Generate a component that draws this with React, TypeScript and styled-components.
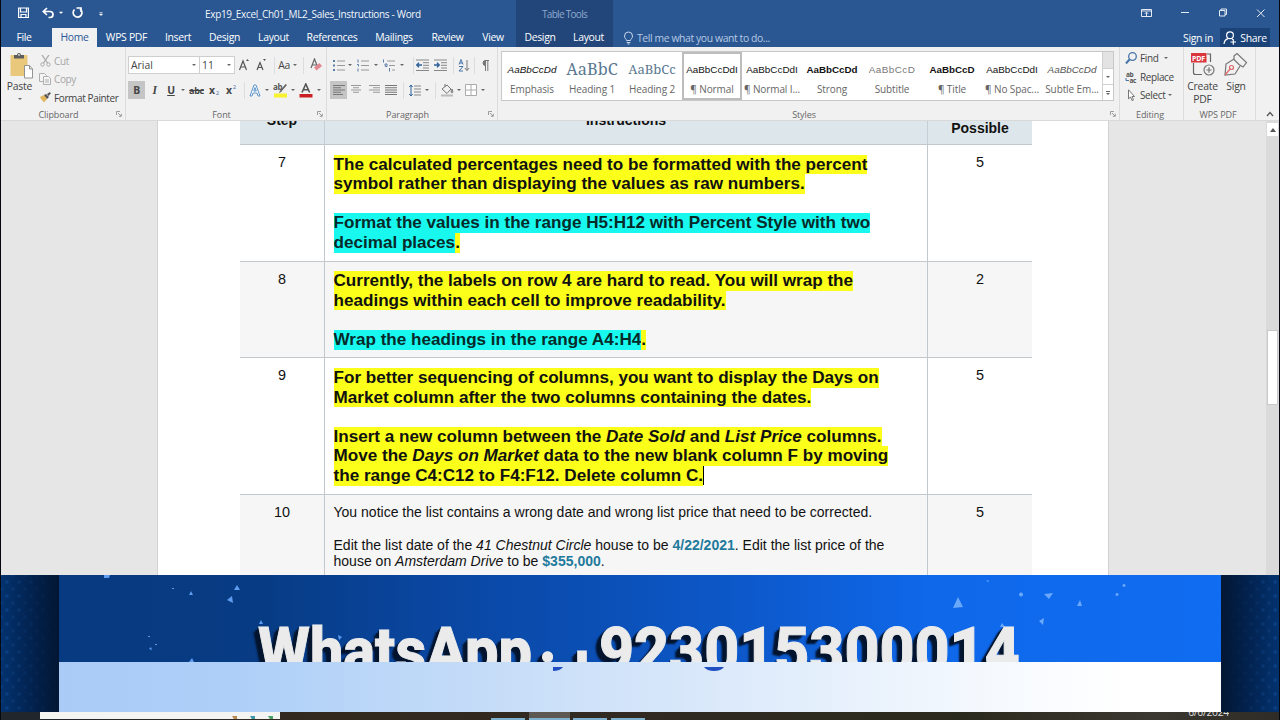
import React from 'react';
import styled, { createGlobalStyle } from 'styled-components';

const Global = createGlobalStyle`
  * { box-sizing: border-box; }
  body { margin: 0; overflow: hidden; background: #000; }
`;

const UI = '"Open Sans", "Noto Sans", sans-serif';
const DOC = '"Liberation Sans", Arial, sans-serif';

const Screen = styled.div`
  width: 1280px;
  height: 720px;
  display: flex;
  flex-direction: column;
  overflow: hidden;
  padding: 0 1px;
  background: #05080f;
  font-family: ${UI};
  font-size: 10.4px;
  letter-spacing: -0.3px;
  color: #444;
`;

/* ---------- header ---------- */
const Header = styled.header`
  height: 47px;
  flex: none;
  display: grid;
  grid-template-columns: 515px 97px 1fr;
  background: #2a5791;
  color: #fff;
`;
const HeadCol = styled.div<{ $dark?: boolean }>`
  display: grid;
  grid-template-rows: 28px 19px;
  background: ${(p) => (p.$dark ? '#224679' : 'transparent')};
`;
const HeadRow = styled.div`
  display: flex;
  align-items: center;
  white-space: nowrap;
`;
const Title = styled.div<{ $l?: number; $dim?: boolean }>`
  margin-left: ${(p) => p.$l ?? 0}px;
  color: ${(p) => (p.$dim ? '#8fa9cf' : '#f3f6fb')};
  font-size: 10px;
  letter-spacing: ${(p) => (p.$dim ? -0.6 : -0.325)}px;
  letter-spacing: ${(p) => (p.$dim ? -0.75 : -0.325) + (p.$dim ? 0.05 : 0)}px;
  line-height: 28px;
`;
const Tab = styled.div<{ $w: number; $on?: boolean }>`
  width: ${(p) => p.$w}px;
  flex: none;
  height: 20px;
  line-height: 19px;
  text-align: center;
  color: ${(p) => (p.$on ? '#2b579a' : '#fff')};
  background: ${(p) => (p.$on ? '#f1f1f1' : 'transparent')};
`;
const Hint = styled.div`
  color: #b6c8e4;
  margin-left: 3px;
  letter-spacing: -0.4px;
  flex: 1;
`;
const Share = styled.div`
  width: 50px;
  height: 19px;
  display: flex;
  align-items: center;
  justify-content: center;
  gap: 3px;
  background: #1c4378;
  margin: 0 9px 0 7px;
`;

/* ---------- ribbon ---------- */
const Ribbon = styled.div`
  height: 74px;
  flex: none;
  display: flex;
  background: #f1f1f1;
  border-bottom: 1px solid #d9d9d9;
`;
const Group = styled.section<{ $w: number }>`
  width: ${(p) => p.$w}px;
  flex: none;
  display: flex;
  flex-direction: column;
  border-right: 1px solid #dcdcdc;
`;
const GroupBody = styled.div<{ $pad?: string }>`
  height: 60px;
  display: flex;
  padding: ${(p) => p.$pad ?? '0'};
`;
const GroupLabel = styled.div`
  height: 13px;
  line-height: 15px;
  font-size: 9px;
  letter-spacing: -0.1px;
  color: #666;
  display: flex;
  padding-right: 3px;
  span { flex: 1; text-align: center; }
  svg { margin-top: 4px; }
`;
const Stack = styled.div<{ $gap?: number }>`
  display: flex;
  flex-direction: column;
  gap: ${(p) => p.$gap ?? 0}px;
`;
const BigButton = styled.div<{ $w: number }>`
  width: ${(p) => p.$w}px;
  display: flex;
  flex-direction: column;
  align-items: center;
  text-align: center;
  line-height: 13px;
  letter-spacing: -0.2px;
  svg { flex: none; margin-bottom: 1px; }
  i { margin-top: 5px; }
`;
const Command = styled.div<{ $dim?: boolean; $pad?: number }>`
  height: 18.5px;
  display: flex;
  align-items: center;
  gap: 3px;
  padding-left: ${(p) => p.$pad ?? 0}px;
  white-space: nowrap;
  font-size: 10px;
  letter-spacing: -0.38px;
  color: ${(p) => (p.$dim ? '#a6a6a6' : '#444')};
`;
const Caret = styled.i`
  width: 0;
  height: 0;
  flex: none;
  border: 2px solid transparent;
  border-top-color: #666;
  border-bottom: 0;
`;
const Tools = styled.div`
  display: flex;
  align-items: center;
  height: 18px;
`;
const Slot = styled.div<{ $w: number; $on?: boolean }>`
  width: ${(p) => p.$w}px;
  height: 18px;
  flex: none;
  display: flex;
  align-items: center;
  justify-content: center;
  background: ${(p) => (p.$on ? '#c5c5c5' : 'transparent')};
  svg { flex: none; }
`;
const Italic = styled.b`
  font-family: "Liberation Serif", serif;
  font-style: italic;
  font-size: 11.5px;
`;
const Struck = styled.b`
  font-size: 9px;
  text-decoration: line-through;
`;
const Script = styled.span<{ $up?: boolean }>`
  font-size: 6px;
  line-height: 8px;
  color: #4775a8;
  margin: ${(p) => (p.$up ? '0 0 7px 1px' : '6px 0 0 1px')};
`;
const Combo = styled.div<{ $w: number }>`
  width: ${(p) => p.$w}px;
  height: 18px;
  flex: none;
  display: flex;
  align-items: center;
  justify-content: space-between;
  padding: 0 3px 0 2px;
  letter-spacing: 0;
  background: #fff;
  border: 1px solid #cfcfcf;
  & + & { border-left: 0; }
`;
const Rule = styled.div`
  width: 1px;
  height: 17px;
  background: #dcdcdc;
`;
const Gallery = styled.div`
  width: 613px;
  height: 50px;
  display: flex;
  background: #fff;
  border: 1px solid #c8c8c8;
`;
const StyleCard = styled.div<{ $on?: boolean }>`
  width: 60px;
  height: 48px;
  flex: none;
  border: 2px solid ${(p) => (p.$on ? '#bdbdbd' : 'transparent')};
  display: flex;
  flex-direction: column;
  align-items: center;
`;
const Sample = styled.div<{ $v?: string }>`
  height: 30px;
  line-height: 31px;
  display: flex;
  justify-content: center;
  white-space: nowrap;
  font-family: ${(p) => (p.$v === 'head1' || p.$v === 'head2' ? '"Noto Serif", "Liberation Serif", serif' : DOC)};
  font-size: ${(p) => (p.$v === 'head1' ? 16.3 : p.$v === 'head2' ? 13 : p.$v === 'bold' ? 9.8 : 9.9)}px;
  font-style: ${(p) => (p.$v === 'italic' || p.$v === 'soft' ? 'italic' : 'normal')};
  font-weight: ${(p) => (p.$v === 'bold' ? 700 : 400)};
  letter-spacing: ${(p) => (p.$v === 'spaced' ? 0.45 : 0)}px;
  color: ${(p) =>
    p.$v === 'head1' || p.$v === 'head2' ? '#5a7890' : p.$v === 'spaced' ? '#777' : p.$v === 'soft' ? '#555' : '#111'};
`;
const SampleName = styled.div`
  line-height: 11px;
  font-size: 10px;
  letter-spacing: -0.1px;
  color: #666;
  white-space: nowrap;
`;
const GalleryScroll = styled.div`
  width: 11px;
  margin-left: auto;
  display: grid;
  grid-template-rows: 1fr 1fr 1fr;
  border-left: 1px solid #d0d0d0;
`;
const ScrollCell = styled.div<{ $off?: boolean }>`
  display: flex;
  flex-direction: column;
  gap: 1px;
  align-items: center;
  justify-content: center;
  background: ${(p) => (p.$off ? '#e3e3e3' : '#fff')};
  & + & { border-top: 1px solid #d0d0d0; }
`;
const Bar = styled.span`
  width: 4px;
  height: 1px;
  background: #666;
`;
const Collapse = styled.div`
  flex: 1;
  display: flex;
  align-items: flex-end;
  justify-content: center;
  padding: 0 0 3px 4px;
`;

/* ---------- document ---------- */
const Workspace = styled.main`
  height: 454px;
  flex: none;
  display: flex;
  justify-content: space-between;
  background: #e6e6e6;
  letter-spacing: 0;
`;
const Page = styled.div`
  width: 952px;
  margin-left: 156px;
  background: #fff;
  border: 1px solid #d2d2d2;
  border-width: 0 1px;
  overflow: hidden;
  font-family: ${DOC};
  color: #111;
`;
const Row = styled.div<{ $h: number; $bg?: string }>`
  width: 792px;
  height: ${(p) => p.$h}px;
  margin-left: 82px;
  display: grid;
  grid-template-columns: 84px 604px 104px;
  background: ${(p) => p.$bg ?? '#fff'};
  border-bottom: 1px solid #c3c8cc;
`;
const Num = styled.div`
  text-align: center;
  font-size: 14.4px;
  line-height: 17px;
  padding-top: 9px;
`;
const Body = styled.div<{ $top?: number }>`
  border: 1px solid #c3c8cc;
  border-width: 0 1px;
  padding: ${(p) => p.$top ?? 10}px 0 0 8.5px;
  white-space: nowrap;
`;
const HeadCell = styled.div`
  border: 1px solid #c3d0d6;
  border-width: 0 1px;
`;
const Shift = styled.div<{ $y: number }>`
  margin-top: ${(p) => p.$y}px;
  text-align: center;
  font-weight: 700;
  font-size: 14px;
  line-height: 14px;
`;
const Line = styled.div`
  height: 19.6px;
  line-height: 19.6px;
  font-size: 17.1px;
  font-weight: 700;
`;
const Mark = styled.span<{ $c?: boolean }>`
  padding: 0.4px 0;
  background: ${(p) => (p.$c ? '#19f8ee' : '#fbff19')};
  color: ${(p) => (p.$c ? '#062a2a' : '#111')};
`;
const Cursor = styled.span`
  border-right: 1px solid #000;
`;
const Small = styled.div`
  height: 16.3px;
  line-height: 16.3px;
  font-size: 14.03px;
  b { color: #1f7a9c; }
`;
const ScrollBar = styled.div`
  width: 13px;
  display: flex;
  flex-direction: column;
  background: #dadada;
`;
const ScrollArrow = styled.div`
  height: 13px;
  margin: 2px 1px 0;
  background: #fff;
  display: flex;
  align-items: center;
  justify-content: center;
`;
const Thumb = styled.div`
  margin: 194px 1px 0;
  height: 75px;
  background: #fff;
  border: 1px solid #c9c9c9;
`;

/* ---------- banner ---------- */
const Banner = styled.div`
  height: 137px;
  flex: none;
  display: grid;
  grid-template-columns: 58px 1162px 58px;
  letter-spacing: 0;
`;
const Side = styled.div<{ $right?: boolean }>`
  background:
    linear-gradient(${(p) => (p.$right ? '270deg' : '90deg')}, rgba(3, 40, 98, 0) 0%, rgba(2, 24, 58, 0.75) 65%, #021733 100%),
    radial-gradient(circle, #0b4389 1.2px, transparent 2.4px) 0 0 / 12px 14px,
    radial-gradient(circle, #093e80 1.2px, transparent 2.4px) 6px 7px / 12px 14px,
    #03326f;
`;
const Center = styled.div`
  display: grid;
  grid-template-rows: 87px 50px;
`;
const Sky = styled.div`
  position: relative;
  overflow: hidden;
  background: linear-gradient(90deg, #073a80 0, #073b83 17%, #0a46a0 32%, #0b4fb5 46%, #0d5bd0 62%, #0f68ea 75%, #106cf0 100%);
`;
const Specks = styled.svg`
  position: absolute;
  inset: 0;
`;
const Phone = styled.div`
  position: relative;
  display: flex;
  padding: 39px 0 0 199px;
  height: 87px;
  overflow: hidden;
`;
const PhonePart = styled.div<{ $sx: number; $w: number; $drop?: number }>`
  width: ${(p) => p.$w}px;
  margin-top: ${(p) => p.$drop ?? 0}px;
  flex: none;
  font-family: Roboto, sans-serif;
  font-weight: 800;
  font-size: 64px;
  line-height: 75px;
  white-space: nowrap;
  color: #ebebeb;
  -webkit-text-stroke: 1px #ebebeb;
  transform-origin: 0 0;
  transform: scaleX(${(p) => p.$sx});
  text-shadow: -2px 1px 1px #04152f, -4px 3px 1px #04152f, -6px 5px 2px #04152f;
`;
const Pale = styled.div`
  background: linear-gradient(90deg, #a9cbf6 0, #aecff8 15%, #c3dbf8 35%, #d9e8fa 55%, #f5f9fe 80%, #fff 92%);
`;
const Taskbar = styled.div`
  height: 8px;
  flex: none;
  display: flex;
  background: linear-gradient(90deg, #20262b 0, #20262b 3%, #33291f 25%, #302a22 50%, #2b2a1e 75%, #3a3830 90%, #2f2c27 100%);
`;
const SearchBox = styled.div`
  width: 240px;
  height: 7px;
  margin-left: 39px;
  background: #f4f4f2;
  overflow: hidden;
`;
const Windows = styled.div`
  display: flex;
  align-items: flex-end;
  gap: 3.5px;
  margin-left: 211px;
`;
const TaskWindow = styled.div<{ $w: number; $on?: boolean }>`
  width: ${(p) => p.$w}px;
  height: ${(p) => (p.$on ? 8 : 2)}px;
  background: ${(p) => (p.$on ? '#5d5851' : 'transparent')};
  border-bottom: 2px solid #7eb0d0;
`;
const DateText = styled.div`
  height: 8px;
  margin: 0 50px 0 auto;
  overflow: hidden;
  color: #ddd;
  font-size: 10.4px;
  line-height: 0;
`;

const Launcher = () => (
  <svg width="6" height="6" viewBox="0 0 6 6" fill="none" stroke="#888" strokeWidth=".8">
    <path d="M.5 4V.5H4M2 2l3 3M5.3 2.8v2.5H2.8" />
  </svg>
);

const Lines = ({ xs, c = '#777' }: { xs: [number, number][]; c?: string }) => (
  <svg width="12" height="12" viewBox="0 0 12 12" stroke={c} strokeWidth="1">
    {xs.map(([a, b], i) => (
      <path key={i} d={`M${a} ${1.5 + i * 2.25}H${b}`} />
    ))}
  </svg>
);

const List = ({ kind }: { kind: number }) => (
  <svg width="14" height="13" viewBox="0 0 14 13">
    <path
      d={kind === 2 ? 'M5 2H13M7 6.5H13M10 11H13' : 'M5 2H13M5 6.5H13M5 11H13'}
      stroke="#999"
      strokeWidth="1.1"
    />
    {kind === 0 && <path d="M1 1h2v2H1zM1 5.5h2v2H1zM1 10h2v2H1z" fill="#5b7ea6" />}
    {kind === 1 && <path d="M2 .5v3M1 5.5h1.5v2M2 9.5v3" stroke="#5b7ea6" fill="none" />}
    {kind === 2 && <path d="M1.5 .5v3M3 5h2v2.5H3.3zM7.5 9v3.5" stroke="#5b7ea6" fill="none" />}
  </svg>
);

const Indent = ({ flip }: { flip?: boolean }) => (
  <svg width="13" height="12" viewBox="0 0 13 12" fill="none">
    <path d="M0 1H13M7 3.7H13M7 6.3H13M7 9H13M0 11.5H13" stroke="#888" />
    <path d={flip ? 'M0 6H5M3 3.8L5.2 6 3 8.2' : 'M6 6H1M3 3.8L.8 6 3 8.2'} stroke="#2e6099" strokeWidth="1.4" />
  </svg>
);

const Clipboard = () => (
  <svg width="26" height="27" viewBox="0 0 26 27">
    <rect x="3.500" y="3" width="17" height="21" rx="1" fill="#e9c77b" />
    <path d="M7 6.500V3h3a2 2 0 0 1 4 0h3v3.500z" fill="#5d5d5d" />
    <circle cx="12" cy="2.800" r=".9" fill="#eee" />
    <path d="M17.500 13.500h5l3 3.500V26h-8z" fill="#fff" stroke="#888" strokeWidth=".9" />
    <path d="M22.500 13.500V17h3" fill="none" stroke="#888" strokeWidth=".9" />
  </svg>
);

const styleCards: [string, string, string?][] = [
  ['AaBbCcDd', 'Emphasis', 'italic'],
  ['AaBbC', 'Heading 1', 'head1'],
  ['AaBbCc', 'Heading 2', 'head2'],
  ['AaBbCcDdI', '¶ Normal'],
  ['AaBbCcDdI', '¶ Normal I...'],
  ['AaBbCcDd', 'Strong', 'bold'],
  ['AaBbCcD', 'Subtitle', 'spaced'],
  ['AaBbCcD', '¶ Title', 'bold'],
  ['AaBbCcDdI', '¶ No Spac...'],
  ['AaBbCcDd', 'Subtle Em...', 'soft'],
];

const specksLeft =
  'M45 0h6l-1 3h-5zM130 20l2-4 2 4zM175 15l3-5 3 5zM168 25l5-4 1 7zM90 74l2-2 1 3zM130 87l3-4 2 4zM200 49l2-4 2 4zM279 60l4 2-3 3zM89 61h2v1h-2zM96 69h2v1h-2zM113 13h2v1h-2z';
const specksRight =
  'M894 33l5-11 5 10zM985 19l9-1-4 6zM1018 31l3-6 2 6zM980 46l5-3-1 7zM962 17.500a2 2 0 1 0 .1 0zM1065 9a1.500 1.500 0 1 0 .1 0zM1058 18a1.500 1.500 0 1 0 .1 0zM941 52l2-4 3 4zM927 6l2-1 1 2z';

export default function App() {
  return (
    <Screen>
      <Global />
      <Header>
        <HeadCol>
          <HeadRow>
            <svg width="106" height="28" viewBox="0 0 106 28" fill="none" stroke="#fff" strokeWidth="1.2">
              <path d="M17.600 8h9.800v9.500h-9.800zM19.500 8v4h6V8M20 17.500V14.500h5v3" />
              <path d="M42.500 11.500h6.500a3 3 0 0 1 0 6H47.500M46 8L42.300 11.500 46 15" strokeWidth="1.700" />
              <path d="M58.500 12h3l-1.500 1.600zM98.500 14h3l-1.500 1.600zM98.500 12.500h3" strokeWidth=".6" fill="#fff" />
              <path d="M79 9a4.400 4.400 0 1 1-5.500 .5M75.500 8h4.500v4" strokeWidth="1.700" />
            </svg>
            <Title $l={98}>Exp19_Excel_Ch01_ML2_Sales_Instructions - Word</Title>
          </HeadRow>
          <HeadRow>
            <Tab $w={46}>File</Tab>
            <Tab $w={5} />
            <Tab $w={45} $on>Home</Tab>
            <Tab $w={59}>WPS PDF</Tab>
            <Tab $w={44}>Insert</Tab>
            <Tab $w={49}>Design</Tab>
            <Tab $w={49}>Layout</Tab>
            <Tab $w={68}>References</Tab>
            <Tab $w={56}>Mailings</Tab>
            <Tab $w={51}>Review</Tab>
            <Tab $w={40}>View</Tab>
          </HeadRow>
        </HeadCol>
        <HeadCol $dark>
          <HeadRow>
            <Title $l={26} $dim>Table Tools</Title>
          </HeadRow>
          <HeadRow>
            <Tab $w={48}>Design</Tab>
            <Tab $w={49}>Layout</Tab>
          </HeadRow>
        </HeadCol>
        <HeadCol>
          <HeadRow>
            <svg width="666" height="28" viewBox="613 0 666 28" fill="none" stroke="#e4ebf5">
              <path d="M1141.500 9.500h10v7h-10zM1141.500 11h10M1146.500 16v-3.500M1144.800 13.800l1.700-1.700 1.700 1.700" />
              <path d="M1181 12.500h8" />
              <path d="M1219.500 10.500h5.500v5.500h-5.500zM1221 10.500v-1.500h5.500v5.500H1225" />
              <path d="M1257 9.500l7.500 7.500M1264.500 9.500L1257 17" />
            </svg>
          </HeadRow>
          <HeadRow>
            <svg width="21" height="14" viewBox="0 0 21 14" fill="none" stroke="#c9d7ec">
              <path d="M13.500 9.500c0-1.500-2-2-2-4.500a4 4 0 0 1 8 0c0 2.500-2 3-2 4.500zM13.700 11.500h3.600M14.500 13h2" />
            </svg>
            <Hint>Tell me what you want to do...</Hint>
            <span>Sign in</span>
            <Share>
              <svg width="14" height="14" viewBox="0 0 14 14" fill="none" stroke="#fff" strokeWidth="1.200">
                <circle cx="7" cy="4.200" r="3.400" />
                <path d="M1 13c.3-3 2-4.800 4-5.400M9 8l1.500 1M7.500 11h5.500M10.300 8.300v5.500" />
              </svg>
              Share
            </Share>
          </HeadRow>
        </HeadCol>
      </Header>

      <Ribbon>
        <Group $w={125}>
          <GroupBody $pad="5px 0 0 5px">
            <BigButton $w={27}>
              <Clipboard />
              Paste
              <Caret />
            </BigButton>
            <Stack>
              <Command $dim $pad={7}>
                <svg width="11" height="12" viewBox="0 0 11 12" fill="none" stroke="#aaa">
                  <path d="M2 0l5.500 8M9 0L3.500 8" strokeWidth="1.300" />
                  <circle cx="2.500" cy="9.500" r="1.700" />
                  <circle cx="8.500" cy="9.500" r="1.700" />
                </svg>
                Cut
              </Command>
              <Command $dim $pad={6}>
                <svg width="12" height="12" viewBox="0 0 12 12" fill="#f4f4f4" stroke="#b0b0b0">
                  <path d="M.5.500h5l2 2v6h-7z" />
                  <path d="M4.500 3.500h5l2 2v6h-7zM6 7h4M6 9h4" />
                </svg>
                Copy
              </Command>
              <Command $pad={7}>
                <svg width="11" height="11" viewBox="0 0 11 11">
                  <path d="M0 5l4-2 3 4-3 3.500c-1-2-3-2.500-4-5.500z" fill="#e2b45b" />
                  <path d="M4 3l2-1 3 3-2 2zM7 2l3-2 .8 1.500L8.500 4z" fill="#555" />
                </svg>
                Format Painter
              </Command>
            </Stack>
          </GroupBody>
          <GroupLabel>
            <span>Clipboard</span>
            <Launcher />
          </GroupLabel>
        </Group>

        <Group $w={201}>
          <GroupBody $pad="9px 0 0 2px">
            <Stack $gap={7}>
              <Tools>
                <Combo $w={72}>Arial<Caret /></Combo>
                <Combo $w={35}>11<Caret /></Combo>
                <Slot $w={18}>
                  <svg width="12" height="14" viewBox="0 0 12 14" fill="none" stroke="#555" strokeWidth="1.200">
                    <path d="M1.500 12L5 3l3.500 9M2.800 9h4.500" />
                    <path d="M8 3l1.500-2L11 3z" fill="#555" stroke="none" />
                  </svg>
                </Slot>
                <Slot $w={16}>
                  <svg width="12" height="14" viewBox="0 0 12 14" fill="none" stroke="#555" strokeWidth="1.200">
                    <path d="M2 12l3-7.500L8 12M3 9.500h4" />
                    <path d="M8 1h3L9.500 3z" fill="#555" stroke="none" />
                  </svg>
                </Slot>
                <Slot $w={5} />
                <Rule />
                <Slot $w={18}>Aa</Slot>
                <Caret />
                <Slot $w={6} />
                <Rule />
                <Slot $w={23}>
                  <svg width="12" height="14" viewBox="0 0 12 14" fill="none">
                    <path d="M1 10l3.500-9L8 10M2.300 7h4" stroke="#666" strokeWidth="1.200" />
                    <path d="M4 9.500L9.500 5 12 8l-5.500 4.500z" fill="#e08792" />
                  </svg>
                </Slot>
              </Tools>
              <Tools>
                <Slot $w={17} $on><b>B</b></Slot>
                <Slot $w={19}><Italic>I</Italic></Slot>
                <Slot $w={14}><b><u>U</u></b></Slot>
                <Slot $w={10}><Caret /></Slot>
                <Slot $w={17}><Struck>abc</Struck></Slot>
                <Slot $w={18}><b>x</b><Script>2</Script></Slot>
                <Slot $w={16}><b>x</b><Script $up>2</Script></Slot>
                <Slot $w={5} />
                <Rule />
                <Slot $w={20}>
                  <svg width="12" height="13" viewBox="0 0 12 13" fill="#fff" stroke="#5b93c9">
                    <path d="M1 12L5 1h2l4 11H9L8 9H4l-1 3zM4.800 7h2.500L6 3.500z" />
                  </svg>
                </Slot>
                <Caret />
                <Slot $w={22}>
                  <svg width="15" height="15" viewBox="0 0 15 15">
                    <path d="M1 10.500h13v4H1z" fill="#f7f12e" />
                    <text x="0" y="7" fontSize="8" fontWeight="700" fill="#555" fontFamily="Open Sans">ab</text>
                    <path d="M14 2L8 9l-2 1 .8-2L12.500 1z" fill="#666" />
                  </svg>
                </Slot>
                <Caret />
                <Slot $w={22}>
                  <svg width="14" height="15" viewBox="0 0 14 15">
                    <path d="M.5 11h13v3.500H.5z" fill="#cb1f26" />
                    <path d="M3 9.500L6.800 1l3.800 8.500M4.300 6.700h5" stroke="#555" fill="none" strokeWidth="1.600" />
                  </svg>
                </Slot>
                <Caret />
              </Tools>
            </Stack>
          </GroupBody>
          <GroupLabel>
            <span>Font</span>
            <Launcher />
          </GroupLabel>
        </Group>

        <Group $w={171}>
          <GroupBody $pad="9px 0 0 3px">
            <Stack $gap={7}>
              <Tools>
                <Slot $w={18}><List kind={0} /></Slot>
                <Caret />
                <Slot $w={22}><List kind={1} /></Slot>
                <Caret />
                <Slot $w={22}><List kind={2} /></Slot>
                <Caret />
                <Slot $w={9} />
                <Rule />
                <Slot $w={17}><Indent /></Slot>
                <Slot $w={18}><Indent flip /></Slot>
                <Slot $w={4} />
                <Rule />
                <Slot $w={20}>
                  <svg width="12" height="13" viewBox="0 0 12 13" fill="none">
                    <path d="M1 5.500L3 .5l2 5M1.800 4h2.500M1 7.500h4L1 12h4" stroke="#4775a8" />
                    <path d="M9 1v10.500M6.800 9L9 11.500 11.200 9" stroke="#777" />
                  </svg>
                </Slot>
                <Rule />
                <Slot $w={20}>
                  <svg width="8" height="11" viewBox="0 0 8 11">
                    <path d="M3.500.5H8M4.500.5V11M6.800.5V11" stroke="#777" />
                    <path d="M4.500.5v5A2.500 2.500 0 0 1 4.500.5z" fill="#777" stroke="#777" />
                  </svg>
                </Slot>
              </Tools>
              <Tools>
                <Slot $w={17} $on><Lines xs={[[0, 12], [0, 8], [0, 12], [0, 8], [0, 10]]} /></Slot>
                <Slot $w={18}><Lines c="#999" xs={[[1, 11], [3, 9], [1, 11], [3, 9]]} /></Slot>
                <Slot $w={17}><Lines c="#999" xs={[[1, 12], [5, 12], [1, 12], [5, 12]]} /></Slot>
                <Slot $w={18}><Lines xs={[[0, 12], [0, 12], [0, 12], [0, 12], [0, 12]]} /></Slot>
                <Slot $w={3} />
                <Rule />
                <Slot $w={21}>
                  <svg width="12" height="13" viewBox="0 0 12 13" fill="none">
                    <path d="M5 2h7M5 5h7M5 8h7M5 11h7" stroke="#888" />
                    <path d="M2 1v11M.3 3L2 1l1.700 2M.3 10L2 12l1.700-2" stroke="#2e6099" />
                  </svg>
                </Slot>
                <Caret />
                <Slot $w={6} />
                <Rule />
                <Slot $w={21}>
                  <svg width="14" height="14" viewBox="0 0 14 14" fill="none" stroke="#777">
                    <path d="M2 6l5-4 4 4-4 4.500zM5 4V1M12 6c1.500 3 .5 4 0 4s-1.500-1 0-4" />
                    <path d="M1 12.500h12" strokeWidth="2" stroke="#bbb" />
                  </svg>
                </Slot>
                <Caret />
                <Slot $w={20}>
                  <svg width="12" height="12" viewBox="0 0 12 12" fill="#fff" stroke="#aaa">
                    <path d="M.5.500h11v11H.5zM6 0v12M0 6h12" />
                  </svg>
                </Slot>
                <Caret />
              </Tools>
            </Stack>
          </GroupBody>
          <GroupLabel>
            <span>Paragraph</span>
            <Launcher />
          </GroupLabel>
        </Group>

        <Group $w={622}>
          <GroupBody $pad="4px 0 0 3px">
            <Gallery>
              {styleCards.map(([sample, name, v], i) => (
                <StyleCard key={name} $on={i === 3}>
                  <Sample $v={v}>{sample}</Sample>
                  <SampleName>{name}</SampleName>
                </StyleCard>
              ))}
              <GalleryScroll>
                <ScrollCell $off />
                <ScrollCell><Caret /></ScrollCell>
                <ScrollCell><Bar /><Caret /></ScrollCell>
              </GalleryScroll>
            </Gallery>
          </GroupBody>
          <GroupLabel>
            <span>Styles</span>
            <Launcher />
          </GroupLabel>
        </Group>

        <Group $w={64}>
          <GroupBody $pad="2px 0 0 5px">
            <Stack>
              <Command>
                <svg width="12" height="12" viewBox="0 0 12 12" fill="none" stroke="#4775a8" strokeWidth="1.300">
                  <circle cx="7.500" cy="4.500" r="3.800" />
                  <path d="M4.500 7.500L1 11.500" strokeWidth="2" />
                </svg>
                Find&nbsp;
                <Caret />
              </Command>
              <Command>
                <svg width="12" height="12" viewBox="0 0 12 12">
                  <text x="1" y="5.500" fontSize="6.500" fontWeight="700" fill="#555" fontFamily="Open Sans">ab</text>
                  <text x="4.500" y="11.800" fontSize="6.500" fontWeight="700" fill="#555" fontFamily="Open Sans">ac</text>
                  <path d="M1 7v2.500h3" stroke="#4775a8" fill="none" />
                </svg>
                Replace
              </Command>
              <Command>
                <svg width="12" height="12" viewBox="0 0 12 12" fill="#fff" stroke="#777">
                  <path d="M3.500 .8v9L5.500 8 7 11.500 8.500 11 7 7.500H9.500z" />
                </svg>
                Select
                <Caret />
              </Command>
            </Stack>
          </GroupBody>
          <GroupLabel>
            <span>Editing</span>
          </GroupLabel>
        </Group>

        <Group $w={72}>
          <GroupBody $pad="6px 0 0 2px">
            <BigButton $w={33}>
              <svg width="24" height="26" viewBox="0 0 24 26" fill="none">
                <path d="M2.500 10v9.500a2 2 0 0 0 2 2H11M16 1h3.500v8" stroke="#666" strokeWidth="1.200" />
                <rect width="15.500" height="9.500" y="0" fill="#d9363e" />
                <text x="1" y="7.500" fontSize="7" fontWeight="700" fill="#fff" fontFamily="Open Sans">PDF</text>
                <circle cx="18" cy="17" r="5" stroke="#777" strokeWidth="1.200" />
                <path d="M18 14.300v5.400M15.300 17h5.400" stroke="#777" strokeWidth="1.200" />
              </svg>
              Create PDF
            </BigButton>
            <BigButton $w={34}>
              <svg width="24" height="26" viewBox="0 0 24 26" fill="none" stroke="#777" strokeWidth="1.200">
                <path d="M10 3l3-2.500 9.500 9-3.500 4.500-4-2.500-5-5z" />
                <path d="M10 6L2 11l-1 11 10-1 5-8" />
                <path d="M1 22l5.500-6.500" stroke="#d66" />
                <circle cx="7.500" cy="14.500" r="2" stroke="#d66" />
              </svg>
              Sign
            </BigButton>
          </GroupBody>
          <GroupLabel>
            <span>WPS PDF</span>
          </GroupLabel>
        </Group>
        <Collapse>
          <svg width="8" height="6" viewBox="0 0 8 6" fill="none" stroke="#555" strokeWidth="1.300">
            <path d="M1 5l3-3.500L7 5" />
          </svg>
        </Collapse>
      </Ribbon>

      <Workspace>
        <Page>
          <Row $h={24} $bg="#dde6ea">
            <Shift $y={-8}>Step</Shift>
            <HeadCell><Shift $y={-8}>Instructions</Shift></HeadCell>
            <Shift $y={0}>Possible</Shift>
          </Row>
          <Row $h={117}>
            <Num>7</Num>
            <Body>
              <Line><Mark>The calculated percentages need to be formatted with the percent</Mark></Line>
              <Line><Mark>symbol rather than displaying the values as raw numbers.</Mark></Line>
              <Line />
              <Line><Mark $c>Format the values in the range H5:H12 with Percent Style with two</Mark></Line>
              <Line><Mark $c>decimal places</Mark><Mark>.</Mark></Line>
            </Body>
            <Num>5</Num>
          </Row>
          <Row $h={96} $bg="#f6f6f6">
            <Num>8</Num>
            <Body $top={9.5}>
              <Line><Mark>Currently, the labels on row 4 are hard to read. You will wrap the</Mark></Line>
              <Line><Mark>headings within each cell to improve readability.</Mark></Line>
              <Line />
              <Line><Mark $c>Wrap the headings in the range A4:H4</Mark><Mark>.</Mark></Line>
            </Body>
            <Num>2</Num>
          </Row>
          <Row $h={137}>
            <Num>9</Num>
            <Body $top={10.3}>
              <Line><Mark>For better sequencing of columns, you want to display the Days on</Mark></Line>
              <Line><Mark>Market column after the two columns containing the dates.</Mark></Line>
              <Line />
              <Line><Mark>Insert a new column between the <i>Date Sold</i> and <i>List Price</i> columns.</Mark></Line>
              <Line><Mark>Move the <i>Days on Market</i> data to the new blank column F by moving</Mark></Line>
              <Line><Mark>the range C4:C12 to F4:F12. Delete column C.</Mark><Cursor /></Line>
            </Body>
            <Num>5</Num>
          </Row>
          <Row $h={90} $bg="#f6f6f6">
            <Num>10</Num>
            <Body $top={9}>
              <Small>You notice the list contains a wrong date and wrong list price that need to be corrected.</Small>
              <Small />
              <Small>Edit the list date of the <i>41 Chestnut Circle</i> house to be <b>4/22/2021</b>. Edit the list price of the</Small>
              <Small>house on <i>Amsterdam Drive</i> to be <b>$355,000</b>.</Small>
            </Body>
            <Num>5</Num>
          </Row>
        </Page>
        <ScrollBar>
          <ScrollArrow>
            <svg width="6" height="4" viewBox="0 0 6 4"><path d="M0 4l3-4 3 4z" fill="#555" /></svg>
          </ScrollArrow>
          <Thumb />
        </ScrollBar>
      </Workspace>

      <Banner>
        <Side />
        <Center>
          <Sky>
            <Specks width="1162" height="87">
              <path d={specksLeft} fill="#5d9cf0" />
              <path d={specksRight} fill="#6aa8fb" />
            </Specks>
            <Phone>
              <PhonePart $sx={0.93} $w={281}>WhatsApp</PhonePart>
              <PhonePart $sx={0.93} $w={27} $drop={14}>:</PhonePart>
              <PhonePart $sx={0.93} $w={33} $drop={16}>+</PhonePart>
              <PhonePart $sx={0.95} $w={430}>923015300014</PhonePart>
            </Phone>
          </Sky>
          <Pale>
            <svg width="1162" height="50">
              <path d="M494 5h10q-3 4-10 4zM645 5h20q-3 4-10 4t-10-4z" fill="#1f4fc0" />
            </svg>
          </Pale>
        </Center>
        <Side $right />
      </Banner>
      <Taskbar>
        <SearchBox>
          <svg width="240" height="7">
            <path d="M192 0h5v3l-2 2z" fill="#b98c55" />
            <path d="M210 0h5v3l-2 2z" fill="#3c98a5" />
            <path d="M228 0h5v3l-2 2z" fill="#4ca36b" />
          </svg>
        </SearchBox>
        <Windows>
          <TaskWindow $w={34} />
          <TaskWindow $w={41} $on />
          <TaskWindow $w={34} />
          <TaskWindow $w={34} />
        </Windows>
        <DateText>6/6/2024</DateText>
      </Taskbar>
    </Screen>
  );
}
